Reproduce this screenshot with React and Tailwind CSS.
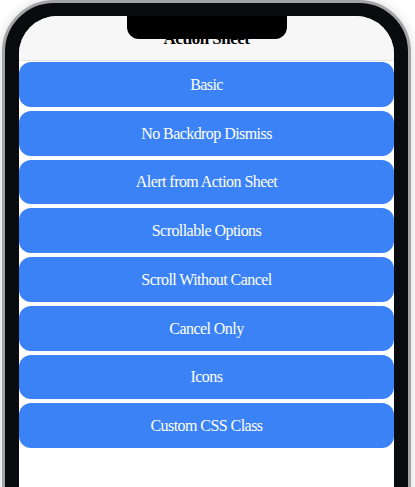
import React from 'react'

const options = [
  'Basic',
  'No Backdrop Dismiss',
  'Alert from Action Sheet',
  'Scrollable Options',
  'Scroll Without Cancel',
  'Cancel Only',
  'Icons',
  'Custom CSS Class',
]

export default function App() {
  return (
    <div className="h-[487px] overflow-hidden bg-white pl-[2px] font-['Liberation_Serif',serif]">
      <div className="relative w-[409px] h-[560px] rounded-[52px] border-[3px] border-[#a3a3a8] bg-[#0a0b0e] px-[14px] pt-[13px] shadow-[0_0_12px_rgba(0,0,0,0.15)]">
        <div className="relative h-full overflow-hidden rounded-t-[38px] bg-white">
          {/* notch */}
          <div className="absolute left-[108px] top-0 z-10 h-[23px] w-[160px] rounded-b-[12px] bg-black" />
          <div className="flex h-[45px] items-center justify-center border-b border-[#e4e4e4] bg-[#f7f7f7]">
            <h1 className="pt-[2px] text-[17px] font-bold tracking-[-0.03em] text-black">Action Sheet</h1>
          </div>
          <div className="flex flex-col gap-[4px] pt-[1px]">
            {options.map((o) => (
              <button
                key={o}
                className="flex h-[44.75px] w-full items-center justify-center rounded-[12px] bg-[#3b82f6] pt-[1px] text-[16px] tracking-[-0.035em] text-white"
              >
                {o}
              </button>
            ))}
          </div>
        </div>
      </div>
    </div>
  )
}
